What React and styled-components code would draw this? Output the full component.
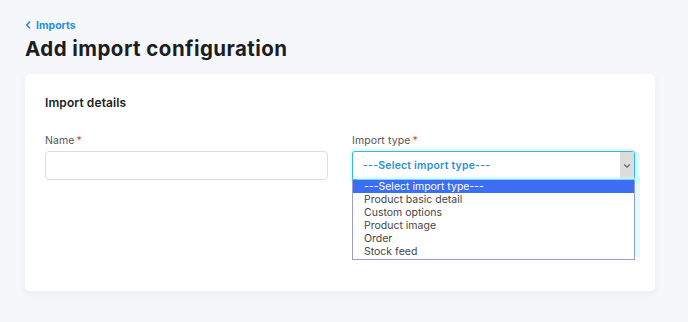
import React from "react";
import styled, { createGlobalStyle } from "styled-components";

const Global = createGlobalStyle`
  html, body { margin: 0; padding: 0; background: #f5f7fa; }
  body { font-family: Inter, "Open Sans", sans-serif; color: #222; }
  * { box-sizing: border-box; }
`;

const Page = styled.div`
  width: 688px;
  height: 322px;
  padding: 18px 33px 0 25px;
  display: flex;
  flex-direction: column;
`;

const Back = styled.a`
  display: flex;
  align-items: center;
  gap: 5px;
  font-size: 10.5px;
  font-weight: 700;
  color: #1e90dc;
  text-decoration: none;
  height: 14px;
`;

const Title = styled.h1`
  margin: 5px 0 0;
  font-size: 20.5px;
  font-weight: 700;
  color: #1d1d1f;
  line-height: 24px;
  letter-spacing: 0.45px;
`;

const Card = styled.section`
  margin-top: 13px;
  background: #fff;
  border-radius: 5px;
  box-shadow: 0 3px 10px rgba(30, 40, 80, 0.05);
  height: 217px;
  padding: 21px 20px 0;
`;

const CardTitle = styled.h2`
  margin: 0;
  font-size: 12px;
  font-weight: 600;
  color: #222;
  line-height: 16px;
  letter-spacing: 0.1px;
`;

const Grid = styled.div`
  margin-top: 23px;
  display: grid;
  grid-template-columns: 283px 283px;
  column-gap: 24px;
`;

const Field = styled.div`
  display: flex;
  flex-direction: column;
  position: relative;
`;

const Label = styled.label`
  font-size: 10.5px;
  color: #555;
  line-height: 14px;
  height: 17px;
  letter-spacing: 0.1px;
  span { color: #e0334a; margin-left: 2px; }
`;

const Input = styled.input`
  height: 29px;
  border: 1px solid #dcdee2;
  border-radius: 4px;
  background: #fff;
  outline: none;
  font: inherit;
`;

const SelectBox = styled.div`
  height: 29px;
  border: 1px solid #3fb2e4;
  border-radius: 3px 3px 0 0;
  background: #fff;
  box-shadow: 0 0 0 2px rgba(150, 245, 255, 0.35), 4px 2px 0 1px rgba(170, 250, 255, 0.4);
  display: flex;
  align-items: stretch;
  position: relative;
`;

const SelectValue = styled.div`
  flex: 1;
  display: flex;
  align-items: center;
  padding-left: 10px;
  font-size: 10.5px;
  font-weight: 600;
  color: #2d8fd8;
  letter-spacing: 0.2px;
`;

const Arrow = styled.div`
  width: 14px;
  background: #dcdcdc;
  display: flex;
  align-items: center;
  justify-content: center;
`;

const List = styled.ul`
  position: absolute;
  top: 46px;
  left: 0;
  width: 283px;
  margin: 0;
  padding: 0 0 1px;
  list-style: none;
  background: #fff;
  border: 1px solid #9d9dcc;
  border-top: none;
  z-index: 2;
  box-shadow: 5px -3px 0 0 rgba(190, 252, 255, 0.5);
`;

const Item = styled.li`
  height: 13px;
  line-height: 13px;
  padding-left: 11px;
  font-size: 10.5px;
  color: ${(p) => (p.$active ? "#fff" : "#444")};
  background: ${(p) => (p.$active ? "#3b6ef5" : "transparent")};
  white-space: nowrap;
`;

const options = [
  "---Select import type---",
  "Product basic detail",
  "Custom options",
  "Product image",
  "Order",
  "Stock feed",
];

export default function App() {
  return (
    <>
      <Global />
      <Page>
        <Back href="#">
          <svg width="6" height="8" viewBox="0 0 6 8">
            <path d="M4.5 1 L1.8 4 L4.5 7" fill="none" stroke="#1e90dc" strokeWidth="1.6" strokeLinecap="round" strokeLinejoin="round" />
          </svg>
          Imports
        </Back>
        <Title>Add import configuration</Title>
        <Card>
          <CardTitle>Import details</CardTitle>
          <Grid>
            <Field>
              <Label>Name<span>*</span></Label>
              <Input />
            </Field>
            <Field>
              <Label>Import type<span>*</span></Label>
              <SelectBox>
                <SelectValue>---Select import type---</SelectValue>
                <Arrow>
                  <svg width="8" height="6" viewBox="0 0 8 6">
                    <path d="M1.2 1.5 L4 4.2 L6.8 1.5" fill="none" stroke="#666" strokeWidth="1.2" />
                  </svg>
                </Arrow>
              </SelectBox>
              <List>
                {options.map((o, i) => (
                  <Item key={o} $active={i === 0}>{o}</Item>
                ))}
              </List>
            </Field>
          </Grid>
        </Card>
      </Page>
    </>
  );
}
